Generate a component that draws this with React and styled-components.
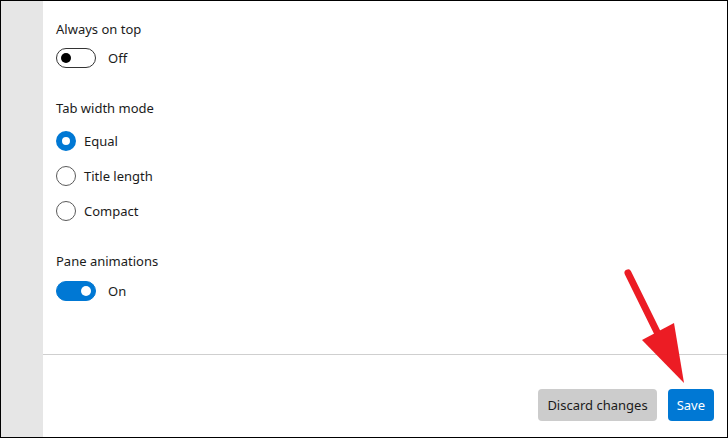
import React, { useState } from 'react';
import styled, { createGlobalStyle } from 'styled-components';

const GlobalStyle = createGlobalStyle`
  html, body {
    margin: 0;
    padding: 0;
    background: #ffffff;
  }
  * {
    box-sizing: border-box;
  }
`;

const Frame = styled.div`
  position: relative;
  width: 728px;
  height: 438px;
  border: 1px solid #000;
  display: flex;
  overflow: hidden;
  font-family: 'Segoe UI', 'Noto Sans', 'Open Sans', sans-serif;
  font-size: 13px;
  color: #1b1b1b;
  background: #fff;
`;

const Sidebar = styled.aside`
  width: 42px;
  flex-shrink: 0;
  background: #e6e6e6;
`;

const Main = styled.main`
  flex: 1;
  display: flex;
  flex-direction: column;
`;

const Content = styled.div`
  flex: 1;
  padding: 18px 13px 0;
  display: flex;
  flex-direction: column;
  gap: 30px;
`;

const Section = styled.section`
  display: flex;
  flex-direction: column;
  gap: ${(p) => p.$gap || 9}px;
`;

const SectionTitle = styled.div`
  line-height: 20px;
  height: 20px;
`;

const ToggleRow = styled.label`
  display: flex;
  align-items: center;
  gap: 12px;
  height: 20px;
  cursor: pointer;
`;

const Track = styled.span`
  position: relative;
  width: 40px;
  height: 20px;
  border-radius: 10px;
  border: 1px solid ${(p) => (p.$on ? '#0078d4' : '#333')};
  background: ${(p) => (p.$on ? '#0078d4' : '#fff')};
  flex-shrink: 0;
`;

const Knob = styled.span`
  position: absolute;
  top: 4px;
  left: ${(p) => (p.$on ? '24px' : '4px')};
  width: 10px;
  height: 10px;
  border-radius: 50%;
  background: ${(p) => (p.$on ? '#fff' : '#000')};
`;

const RadioGroup = styled.div`
  display: flex;
  flex-direction: column;
  gap: 15px;
  margin-top: 4px;
`;

const RadioRow = styled.label`
  display: flex;
  align-items: center;
  gap: 8px;
  height: 20px;
  cursor: pointer;
`;

const RadioDot = styled.span`
  width: 20px;
  height: 20px;
  border-radius: 50%;
  flex-shrink: 0;
  background: #fff;
  border: ${(p) => (p.$checked ? '6px solid #0078d4' : '1px solid #5a5a5a')};
`;

const Footer = styled.footer`
  border-top: 1px solid #cfcfcf;
  height: 83px;
  padding: 34px 13px 0 0;
  display: flex;
  justify-content: flex-end;
  align-items: flex-start;
  gap: 11px;
`;

const Button = styled.button`
  height: 32px;
  padding: 0 9px;
  border: none;
  border-radius: 4px;
  font: inherit;
  cursor: pointer;
  background: ${(p) => (p.$primary ? '#0078d4' : '#cccccc')};
  color: ${(p) => (p.$primary ? '#fff' : '#1b1b1b')};
`;

const Overlay = styled.svg`
  position: absolute;
  left: -1px;
  top: -1px;
  pointer-events: none;
`;

const Toggle = ({ on, onChange }) => (
  <ToggleRow onClick={() => onChange(!on)}>
    <Track $on={on}>
      <Knob $on={on} />
    </Track>
    <span>{on ? 'On' : 'Off'}</span>
  </ToggleRow>
);

const modes = ['Equal', 'Title length', 'Compact'];

export default function App() {
  const [onTop, setOnTop] = useState(false);
  const [mode, setMode] = useState('Equal');
  const [anim, setAnim] = useState(true);

  return (
    <>
      <GlobalStyle />
      <Frame>
        <Sidebar />
        <Main>
          <Content>
            <Section>
              <SectionTitle>Always on top</SectionTitle>
              <Toggle on={onTop} onChange={setOnTop} />
            </Section>
            <Section $gap={9}>
              <SectionTitle>Tab width mode</SectionTitle>
              <RadioGroup>
                {modes.map((m) => (
                  <RadioRow key={m} onClick={() => setMode(m)}>
                    <RadioDot $checked={mode === m} />
                    <span>{m}</span>
                  </RadioRow>
                ))}
              </RadioGroup>
            </Section>
            <Section $gap={10}>
              <SectionTitle>Pane animations</SectionTitle>
              <Toggle on={anim} onChange={setAnim} />
            </Section>
          </Content>
          <Footer>
            <Button>Discard changes</Button>
            <Button $primary>Save</Button>
          </Footer>
        </Main>
        <Overlay width="728" height="438" viewBox="0 0 728 438">
          <line x1="628" y1="273" x2="659" y2="336" stroke="#ec1c24" strokeWidth="7" strokeLinecap="round" />
          <polygon points="642,340 674,323 684,383" fill="#ec1c24" />
        </Overlay>
      </Frame>
    </>
  );
}
